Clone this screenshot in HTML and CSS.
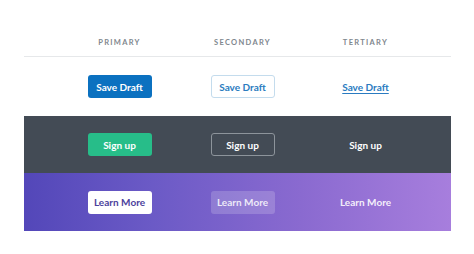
FILE: index.html
```html
<!DOCTYPE html>
<html lang="en">
<head>
    <meta charset="UTF-8">
    <meta name="viewport" content="width=device-width, initial-scale=1.0">
    <title>Button styles</title>
    <link rel="stylesheet" href="styles.css">
</head>
<body>
    <div class="panel">
        <div class="row header">
            <span class="label">Primary</span>
            <span class="label">Secondary</span>
            <span class="label">Tertiary</span>
        </div>

        <div class="row light">
            <button class="btn btn-primary">Save Draft</button>
            <button class="btn btn-secondary">Save Draft</button>
            <a class="link" href="#">Save Draft</a>
        </div>

        <div class="row dark">
            <button class="btn btn-green">Sign up</button>
            <button class="btn btn-outline">Sign up</button>
            <a class="link link-white" href="#">Sign up</a>
        </div>

        <div class="row purple">
            <button class="btn btn-white">Learn More</button>
            <button class="btn btn-ghost">Learn More</button>
            <a class="link link-soft" href="#">Learn More</a>
        </div>
    </div>
</body>
</html>
```

FILE: styles.css
```css
* { box-sizing: border-box; }
body {
    margin: 0;
    padding: 0;
    background: #ffffff;
    font-family: 'Lato', 'Open Sans', sans-serif;
}

.panel {
    width: 427px;
    margin-left: 24px;
}

.row {
    display: grid;
    grid-template-columns: repeat(3, 123px);
    justify-items: center;
    align-items: center;
    padding: 0 24px 0 34px;
    height: 58px;
}

.header {
    height: 57px;
    padding-top: 36px;
    padding-bottom: 7px;
    align-items: start;
    border-bottom: 1px solid #e6e8ea;
}
.label {
    font-size: 7.5px;
    font-weight: 700;
    letter-spacing: 1.3px;
    text-transform: uppercase;
    color: #80878e;
    line-height: 14px;
}

.light { height: 59px; }
.dark { background: #434b55; height: 57px; }
.purple {
    background: linear-gradient(90deg, #5347b9 0%, #6b5ac6 30%, #8a6ad0 65%, #a77edd 100%);
}

.btn {
    width: 64px;
    height: 23px;
    border-radius: 3px;
    border: none;
    font-family: inherit;
    font-size: 10px;
    font-weight: 700;
    padding: 0;
    cursor: pointer;
}
.btn-primary { background: #0b71c0; color: #ffffff; }
.btn-secondary { background: #ffffff; color: #2b7cc0; border: 1.5px solid #c4dced; }
.btn-green { background: #27bd89; color: #ffffff; }
.btn-outline { background: transparent; color: #ffffff; border: 1.5px solid #8d949b; }
.btn-white { background: #ffffff; color: #4c3f9c; }
.btn-ghost { background: rgba(255, 255, 255, 0.18); color: rgba(255, 255, 255, 0.85); }

.link {
    font-size: 10px;
    font-weight: 700;
    color: #2a7bc1;
    text-decoration: underline;
    text-underline-offset: 2px;
}
.link-white { color: #ffffff; text-decoration: none; }
.link-soft { color: rgba(255, 255, 255, 0.9); text-decoration: none; }
```
